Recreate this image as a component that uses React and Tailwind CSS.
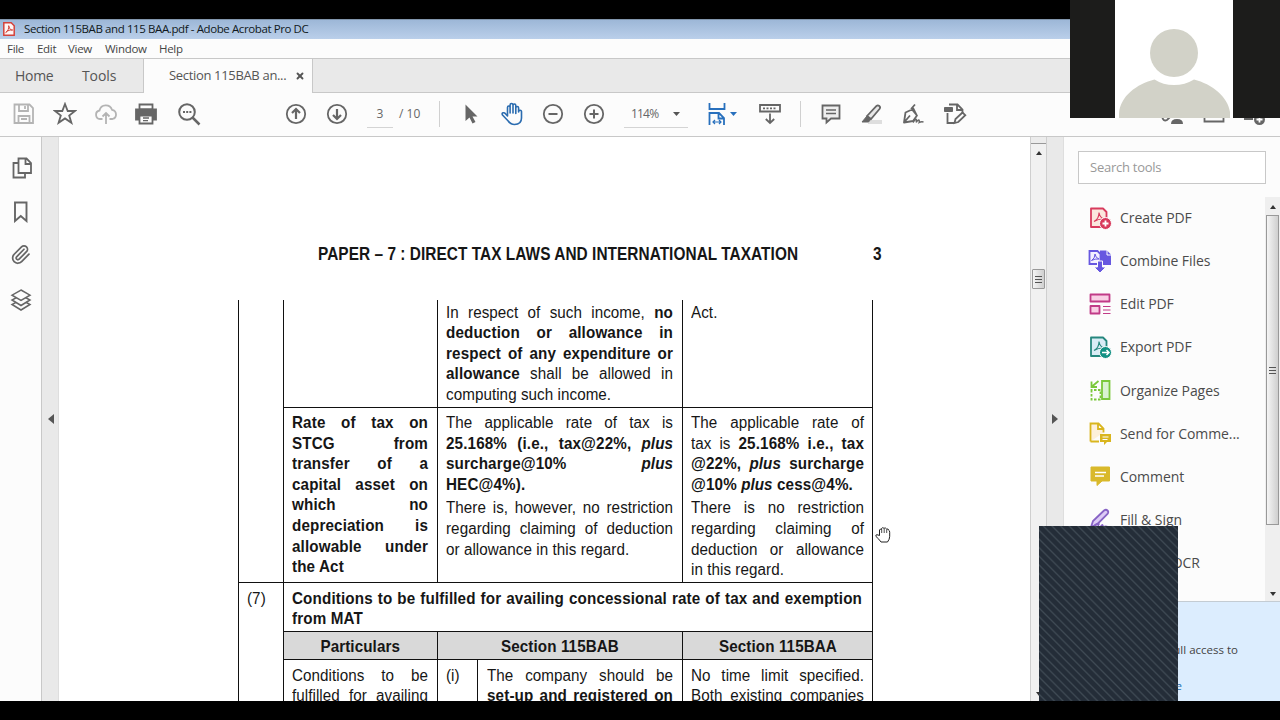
import { Paperclip, X } from "lucide-react";

const menus = [
  { label: "File", cls: "w-[30px]" },
  { label: "Edit", cls: "w-[31px]" },
  { label: "View", cls: "w-[37px]" },
  { label: "Window", cls: "w-[54px]" },
  { label: "Help", cls: "w-[40px]" },
];

const Icon = ({ children, className = "", size = 24 }) => (
  <svg
    width={size}
    height={size}
    viewBox="0 0 24 24"
    fill="none"
    stroke="currentColor"
    strokeWidth="1.8"
    className={`shrink-0 ${className}`}
  >
    {children}
  </svg>
);

const TitleBar = () => (
  <div className="flex h-[20px] items-center bg-gradient-to-b from-[#9db7d7] to-[#bacfea] border-t border-[#8296ad] pl-[3px] pb-[2px] shrink-0">
    <svg width="12" height="14" viewBox="0 0 12 14" fill="#fff5f4" stroke="#d3433c" className="shrink-0">
      <path d="M.8.8h7.4l3 3v9.4H.8z" strokeWidth="1.5" />
      <path d="M2.7 10.5C5 9 6 6.500 5.700 3.700c1 3.800 2.300 4.600 4 4.300-2.500-.4-4.800.4-7 2.500z" strokeWidth="1" />
    </svg>
    <span className="ml-[9px] text-[11.5px] leading-none tracking-[-0.4px] text-[#101820] whitespace-nowrap">
      Section 115BAB and 115 BAA.pdf - Adobe Acrobat Pro DC
    </span>
  </div>
);

const MenuBar = () => (
  <div className="flex h-[19px] items-center bg-[#fcfcfc] pl-[7px] text-[11.5px] tracking-[-0.3px] text-[#454545] shrink-0">
    {menus.map((m) => (
      <span key={m.label} className={m.cls}>{m.label}</span>
    ))}
  </div>
);

const TabBar = () => (
  <div className="flex h-[35px] bg-[#e9e9e9] border-t border-[#c8c8c8] text-[#555] shrink-0">
    <div className="flex w-[144px] items-center border-b border-r border-[#c8c8c8] pl-[15px] text-[14px]">
      <span className="w-[67px] tracking-[-0.3px]">Home</span>
      <span className="tracking-[-0.1px]">Tools</span>
    </div>
    <div className="flex w-[169px] items-center bg-[#fcfcfc] pl-[25px] border-r border-[#c8c8c8]">
      <span className="w-[126px] text-[13px] tracking-[-0.33px] whitespace-nowrap">Section 115BAB an...</span>
      <X size={10} strokeWidth={4.500} />
    </div>
    <div className="flex-1 border-b border-[#c8c8c8]" />
  </div>
);

const Toolbar = () => (
  <div className="flex h-[44px] items-center bg-[#fcfcfc] border-b border-[#c8c8c8] text-[#666] shrink-0 pl-[12px] pb-[1px]">
    <Icon className="text-[#b4b4b4]">
      <path d="M2.500 2.500h15l3.500 3.500v15h-18.500z M7 2.500v6.500h9v-6.500 M6.500 21v-7h11v7 M13 4v3 M9 17h6" />
    </Icon>
    <Icon className="ml-[17px]">
      <path d="M12 2l2.700 7h7.300l-5.800 4.500 2.200 7.300-6.400-4.400-6.400 4.400 2.200-7.300L2 9h7.300z" />
    </Icon>
    <Icon className="ml-[17px] text-[#b4b4b4]">
      <path d="M8.500 17H6a4.300 4.300 0 0 1-.5-8.500A6.500 6.500 0 0 1 18 7.800a4.700 4.700 0 0 1 .5 9.200H15.500 M12 22V11 M8.500 14.500L12 11l3.500 3.500" />
    </Icon>
    <Icon className="ml-[16px]">
      <path d="M5.500 2.500h13v5h-13z" />
      <path d="M2 7.500h20v10h-3.500v-4h-13v4H2z" fill="currentColor" />
      <path d="M5.500 13.500h13v8h-13z" fill="#fcfcfc" />
      <path d="M9 16h6 M9 18.700h5" strokeWidth="1.300" />
    </Icon>
    <Icon className="ml-[19px]">
      <circle cx="10" cy="10" r="7.800" strokeWidth="2" />
      <path d="M15.500 15.500l7 7" strokeWidth="2.500" />
      <path d="M6 10h2 M9.200 10h2 M12.400 10h2" />
    </Icon>
    <Icon className="ml-[83px]">
      <circle cx="12" cy="12" r="9.200" />
      <path d="M12 17V7 M8 11l4-4 4 4" strokeWidth="2.200" />
    </Icon>
    <Icon className="ml-[17px]">
      <circle cx="12" cy="12" r="9.200" />
      <path d="M12 7v10 M8 13l4 4 4-4" strokeWidth="2.200" />
    </Icon>
    <div className="ml-[18px] mt-[4px] flex h-[24px] w-[26px] items-start justify-center border-b border-[#d4d4d4] text-[12px] leading-[20px]">3</div>
    <div className="ml-[6px] w-[34px] text-[12px] whitespace-nowrap">/ 10</div>
    <div className="h-[26px] w-px bg-[#d0d0d0] ml-[6px]" />
    <Icon className="ml-[19px]">
      <path d="M6.500 2.500v16.500l4-3.500 3 6 3-1.500-3-5.500h5z" fill="currentColor" stroke="none" />
    </Icon>
    <Icon className="ml-[17px] text-[#2b6cb0]">
      <path
        d="M7.500 14V5.500q0-1.500 1.300-1.500t1.300 1.500V11V3q0-1.500 1.400-1.500T13 3v8V3.500Q13 2 14.400 2t1.400 1.500V11.500V6q0-1.500 1.400-1.500T18.600 6v4q0-1.700 1.500-1.700T21.500 10v6q0 6.500-7 6.500-4 0-6.300-3.500L2.500 13q-1-1.700.5-2.200 1.500-.4 2.500.9z"
        strokeLinejoin="round"
        strokeWidth="1.600"
      />
    </Icon>
    <Icon className="ml-[17px]">
      <circle cx="12" cy="12" r="9.200" />
      <path d="M7.500 12h9" strokeWidth="2" />
    </Icon>
    <Icon className="ml-[17px]">
      <circle cx="12" cy="12" r="9.200" />
      <path d="M7.500 12h9 M12 7.500v9" strokeWidth="2" />
    </Icon>
    <div className="ml-[18px] mt-[4px] flex h-[24px] w-[64px] border-b border-[#d4d4d4] pl-[7px] text-[12px] leading-[20px] tracking-[-0.8px]">
      <span className="w-[42px]">114%</span>
      <svg width="7" height="4" className="mt-[8px]"><path d="M0 0h7L3.500 4z" fill="#555" /></svg>
    </div>
    <Icon className="ml-[17px] text-[#2870bd]">
      <path d="M4.500 1v6h15V1 M4.500 23V11h9.500l5 5v7 M13.500 11v5.500H19" />
      <path d="M8 20h8 M10 18l-2 2 2 2 M14 18l2 2-2 2" strokeWidth="1.200" />
    </Icon>
    <svg width="7" height="4" className="shrink-0 ml-px"><path d="M0 0h7L3.500 4z" fill="#2870bd" /></svg>
    <Icon className="ml-[21px]">
      <path d="M2 3h20v6.500H2z M12 11.500v9.500 M7.800 17L12 21l4.200-4" />
      <path d="M5 6.300h14" strokeDasharray="2 1.500" />
    </Icon>
    <div className="h-[26px] w-px bg-[#d0d0d0] ml-[18px]" />
    <Icon className="ml-[18px]">
      <path d="M3.500 3.500h17v13H12l-4.500 4v-4h-4z" fill="#eee" />
      <path d="M7 8h10 M7 11.500h10" strokeWidth="1.400" />
    </Icon>
    <Icon className="ml-[17px]">
      <path d="M8 18h14v4H8z" fill="#dedede" stroke="none" />
      <path d="M7 14L16.500 4q1.300-1.300 2.800 0t.2 3L11 17z" fill="#e8e8e8" />
      <path d="M7 14l4 3-2.500 3H2z" fill="currentColor" strokeWidth="1" />
    </Icon>
    <Icon className="ml-[17px]">
      <path d="M3 20.500l1.500-10L11 7.500l5 6-4 5.500zM3 20.500l6-7 M10 7l4-4.500 M16 14l-4-8" strokeLinejoin="round" />
      <path d="M12 20.500c2.500-4 4-4.500 3.200 0 2-3.500 3.500-3 3 0 1.500-1 2.500-1 4.300-.6" strokeWidth="1.500" />
    </Icon>
    <Icon className="ml-[18px]">
      <path d="M6 2.500h8.500l5 5v4 M14 2.500V8h5.500 M4.500 11v10H11" />
      <path d="M1.500 5.500h8v4h-8z" fill="currentColor" strokeWidth="1" />
      <path d="M11.500 21l1-4 7-6.500 2.800 2.700-7 6.800z" fill="#fcfcfc" />
    </Icon>
    <div className="ml-[193px] flex gap-[17px]">
      <Icon>
        <path d="M2 14q1 6 5 4l3-3" />
        <path d="M11 22q0-5 6-5t6 5z" fill="currentColor" stroke="none" />
      </Icon>
      <Icon className="ml-[1px]"><path d="M2.500 8h19v11.500h-19z" /></Icon>
      <Icon>
        <path d="M1 16.500h9" strokeWidth="3" />
        <circle cx="16.500" cy="17.500" r="5.500" fill="currentColor" stroke="none" />
        <path d="M13.500 17.500h6 M16.500 14.500v6" stroke="#fff" />
      </Icon>
    </div>
  </div>
);

const NavPane = () => (
  <div className="flex w-[42px] flex-col bg-[#fcfcfc] border-r border-[#c8c8c8] pl-[10px] pt-[19px] gap-[21px] text-[#666] shrink-0">
    <Icon className="h-[24px]">
      <path d="M8.500 2.500h8l4.500 4.500v10H8.500z M15.500 2.500V8H21 M8.500 7H3.500v14.500H15V17" />
    </Icon>
    <svg width="22" height="22" viewBox="0 0 22 22" fill="none" stroke="currentColor" strokeWidth="1.900">
      <path d="M5 1.500h11.500v18.500l-5.750-5L5 20z" />
    </svg>
    <Paperclip size={21} strokeWidth={2} />
    <svg width="22" height="24" viewBox="0 0 22 24" fill="#fcfcfc" stroke="currentColor" strokeWidth="1.500" className="mt-[2px]">
      <path d="M11 11.500l9 5-9 5.500-9-5.500z" />
      <path d="M11 7l9 5-9 5.500L2 12z" />
      <path d="M11 2l9 5.200-9 5.300-9-5.300z" />
    </svg>
  </div>
);

const Handle = ({ side }) => (
  <div
    className={`flex w-[17px] items-center justify-center bg-[#e9e9e9] border-r border-[#dedede] shrink-0 ${side === "left" ? "pl-[2px]" : ""}`}
  >
    <svg width="6" height="10">
      <path d={side === "left" ? "M6 0v10L0 5z" : "M0 0v10l6-5z"} fill="#555" />
    </svg>
  </div>
);

// One printed line; lines flagged "j" are spread over the full column width.
// The condensed face is the regular one squeezed to 88%.
const Line = ({ children, j }) => (
  <div
    className={`h-[20.6px] w-[113.636%] origin-left scale-x-88 whitespace-nowrap tracking-[0.06px] ${j ? "[text-align-last:justify]" : ""}`}
  >
    {children}
  </div>
);

const B = ({ children }) => <b className="tracking-[0.15px]">{children}</b>;
const I = ({ children }) => <b className="italic">{children}</b>;

const Th = ({ children }) => (
  <div className="flex justify-center border-r border-b border-[#111] bg-[#d9d9d9] pt-[4px]">
    <b className="scale-x-88 whitespace-nowrap tracking-[0.1px]">{children}</b>
  </div>
);

const cell = "min-w-0 border-r border-b border-[#111] pl-[8px]";

const Page = () => (
  <div className="flex-1 min-w-0 overflow-hidden bg-white pl-[179px] font-['Liberation_Sans',Arial,sans-serif] text-[17.3px] leading-[20.6px] text-[#161616]">
    <div className="flex h-[163px] pl-[80px] pt-[107px] font-bold text-[17.5px]">
      <span className="w-[555px] origin-left scale-x-88 whitespace-nowrap tracking-[0.05px]">
        PAPER – 7 : DIRECT TAX LAWS AND INTERNATIONAL TAXATION
      </span>
      <span className="origin-left scale-x-88">3</span>
    </div>
    <div className="grid w-[635px] grid-cols-[45px_154px_245px_190px] grid-rows-[108px_175px_49px_28px_120px] border-l border-[#111]">
      <div className="border-r border-[#111]" />
      <div className={cell} />
      <div className={`${cell} pt-[1.500px] pr-[9px]`}>
        <Line j>In respect of such income, <B>no</B></Line>
        <Line j><B>deduction or allowance in</B></Line>
        <Line j><B>respect of any expenditure or</B></Line>
        <Line j><B>allowance</B> shall be allowed in</Line>
        <Line>computing such income.</Line>
      </div>
      <div className={`${cell} pt-[1.500px] pr-[8px]`}><Line>Act.</Line></div>

      <div className="border-r border-b border-[#111]" />
      <div className={`${cell} pt-[4px] pr-[9px]`}>
        <Line j><B>Rate of tax on</B></Line>
        <Line j><B>STCG from</B></Line>
        <Line j><B>transfer of a</B></Line>
        <Line j><B>capital asset on</B></Line>
        <Line j><B>which no</B></Line>
        <Line j><B>depreciation is</B></Line>
        <Line j><B>allowable under</B></Line>
        <Line><B>the Act</B></Line>
      </div>
      <div className={`${cell} pt-[4px] pr-[9px]`}>
        <Line j>The applicable rate of tax is</Line>
        <Line j><B>25.168% (i.e., tax@22%, </B><I>plus</I></Line>
        <Line j><B>surcharge@10% </B><I>plus</I></Line>
        <Line><B>HEC@4%).</B></Line>
        <div className="pt-[3px]">
          <Line j>There is, however, no restriction</Line>
          <Line j>regarding claiming of deduction</Line>
          <Line>or allowance in this regard.</Line>
        </div>
      </div>
      <div className={`${cell} pt-[4px] pr-[8px]`}>
        <Line j>The applicable rate of</Line>
        <Line j>tax is <B>25.168% i.e., tax</B></Line>
        <Line j><B>@22%, </B><I>plus</I><B> surcharge</B></Line>
        <Line><B>@10% </B><I>plus</I><B> cess@4%.</B></Line>
        <div className="pt-[3px]">
          <Line j>There is no restriction</Line>
          <Line j>regarding claiming of</Line>
          <Line j>deduction or allowance</Line>
          <Line>in this regard.</Line>
        </div>
      </div>

      <div className="row-span-3 border-r border-[#111] pt-[4.500px] pl-[8px]"><Line>(7)</Line></div>
      <div className={`${cell} col-span-3 pr-[10px] pt-[4.500px]`}>
        <Line j><B>Conditions to be fulfilled for availing concessional rate of tax and exemption</B></Line>
        <Line><B>from MAT</B></Line>
      </div>

      <Th>Particulars</Th>
      <Th>Section 115BAB</Th>
      <Th>Section 115BAA</Th>

      <div className={`${cell} pt-[4.500px] pr-[9px]`}>
        <Line j>Conditions to be</Line>
        <Line j>fulfilled for availing</Line>
      </div>
      <div className="grid min-w-0 grid-cols-[40px_204px] border-r border-[#111]">
        <div className="border-r border-[#111] pl-[8px] pt-[4.500px]"><Line>(i)</Line></div>
        <div className="min-w-0 pt-[4.500px] pl-[9px] pr-[9px]">
          <Line j>The company should be</Line>
          <Line j><B>set-up and registered on</B></Line>
        </div>
      </div>
      <div className={`${cell} pt-[4.500px] pr-[8px]`}>
        <Line j>No time limit specified.</Line>
        <Line j>Both existing companies</Line>
      </div>
    </div>
  </div>
);

const Grip = () => (
  <svg width="7" height="7" viewBox="0 0 7 7" stroke="#555" strokeWidth="1">
    <path d="M0 .5h7M0 3.500h7M0 6.500h7" />
  </svg>
);

const PageScroll = () => (
  <div className="flex w-[17px] flex-col items-center border-x border-[#cfcfcf] bg-[#f1f1f1] shrink-0">
    <div className="h-[7px] w-full border-b border-[#999] bg-[#ececec]" />
    <svg width="6" height="4" className="mt-[7px]"><path d="M3 0l3 4H0z" fill="#333" /></svg>
    <div className="mt-[114px] flex h-[20px] w-[13px] items-center justify-center rounded-[1px] border border-[#999] bg-gradient-to-r from-[#f5f5f5] to-[#cfcfcf]">
      <Grip />
    </div>
    <svg width="6" height="4" className="mt-auto mb-[5px]"><path d="M0 0h6L3 4z" fill="#333" /></svg>
  </div>
);

const PdfSheet = ({ fill }) => (
  <>
    <path d="M3 2.500h12l3.500 3.500v15H3z" fill={fill} strokeLinejoin="round" />
    <path d="M6 15.500q5-2.500 5-9 1 5.500 5 6.500-5-.5-10 2.500z" strokeWidth="1.100" />
  </>
);

const tools = [
  {
    name: "Create PDF",
    cls: "text-[#d83b5d]",
    art: (
      <>
        <PdfSheet fill="#fbe7dd" />
        <circle cx="17.500" cy="17.500" r="6" fill="currentColor" stroke="#fcfcfc" strokeWidth="1" />
        <path d="M14.500 17.500h6M17.500 14.500v6" stroke="#fff" />
      </>
    ),
  },
  {
    name: "Combine Files",
    cls: "text-[#6758e0]",
    art: (
      <>
        <path d="M12 1.500h7l4 4V16H12z" fill="currentColor" stroke="none" />
        <path d="M19 1v5h4" stroke="#fff" strokeWidth="1" />
        <path d="M1.500 2h8l3 3v10H1.500z" fill="#f4f1ff" />
        <path d="M3.500 11.500q3.500-2 3.500-6.500.5 4 4 5-4-.5-7.500 1.500z" strokeWidth="1" />
        <path d="M9.500 12h5v6h3.500l-6 6-6-6h3.500z" fill="currentColor" stroke="#fcfcfc" strokeWidth="1" />
      </>
    ),
  },
  {
    name: "Edit PDF",
    cls: "text-[#c13b88]",
    art: (
      <>
        <path d="M2.500 2.500h19v7h-19zM2.500 14h9v7.500h-9z" fill="#f9cfe5" strokeLinejoin="round" />
        <path d="M15 14.500h7.500M15 18h7.500M15 21.500h7.500" strokeWidth="1.200" />
      </>
    ),
  },
  {
    name: "Export PDF",
    cls: "text-[#26877e]",
    art: (
      <>
        <PdfSheet fill="#d9ecf5" />
        <circle cx="17.500" cy="17.500" r="6" fill="#139184" stroke="#fcfcfc" strokeWidth="1" />
        <path d="M14 17.500h7M18.500 15l2.500 2.500-2.500 2.500" stroke="#fff" strokeWidth="1.500" />
      </>
    ),
  },
  {
    name: "Organize Pages",
    cls: "text-[#7ac83b]",
    art: (
      <>
        <path d="M14 3h7.500v18H14z" fill="#d9f3d0" />
        <path d="M3.500 12v9.500h9V12z" strokeDasharray="2.500 1.500" />
        <path d="M10.500 3L4 8.500M3.500 3.500V9H9" />
      </>
    ),
  },
  {
    name: "Send for Comme...",
    cls: "text-[#d9b51e]",
    art: (
      <>
        <path d="M2.500 20.500v-18h8l5 5v4M10 2.500V8h5.500M2.500 20.500H11" fill="#fdf0da" />
        <path d="M12 13h11v8h-4l-3 3v-3h-4z" fill="currentColor" stroke="none" />
        <path d="M14.500 16h6M14.500 18.500h5" stroke="#fff" strokeWidth="1" />
      </>
    ),
  },
  {
    name: "Comment",
    cls: "text-[#d9b92b]",
    art: (
      <>
        <path d="M3 3h18.500v14H14l-5 4.500V17H3z" fill="currentColor" strokeLinejoin="round" strokeWidth="1" />
        <path d="M7 8.500h11M7 12h9" stroke="#fff" strokeWidth="1.400" />
      </>
    ),
  },
  {
    name: "Fill & Sign",
    cls: "text-[#8763c5]",
    art: (
      <>
        <path d="M3 19l2-6L16 2.500q2-1.500 3.500 0t0 3.500L9 16.500z" fill="#dccbf5" />
        <path d="M2 22q7-8 9-6-3 6 0 5 4-7 4-2 4-2 6 1" strokeWidth="1.600" />
      </>
    ),
  },
  { name: "Scan & OCR", cls: "mr-[4px] text-[#63a653]", art: <path d="M3 3h18v18H3z" /> },
];

const ToolsPane = () => (
  <div className="flex w-[216px] shrink-0 flex-col bg-[#fcfcfc]">
    <div className="ml-[14px] mt-[14px] flex h-[33px] w-[188px] shrink-0 items-center border border-[#c8c8c8] bg-white pl-[11px] text-[13px] tracking-[-0.25px] text-[#999]">
      Search tools
    </div>
    <div className="mt-[13px] flex h-[405px] shrink-0 overflow-hidden border-b border-[#c4ccd3]">
      <div className="-mt-px flex w-[201px] flex-col pl-[24px]">
        {tools.map((t) => (
          <div key={t.name} className="flex h-[43.15px] shrink-0 items-center gap-[8px]">
            <Icon className={t.cls}>{t.art}</Icon>
            <span className="text-[14px] tracking-[-0.07px] text-[#4b4b4b] whitespace-nowrap">{t.name}</span>
          </div>
        ))}
      </div>
      <div className="flex w-[15px] flex-col items-center bg-[#efefef]">
        <svg width="6" height="4" className="mt-[8px]"><path d="M3 0l3 4H0z" fill="#333" /></svg>
        <div className="mt-[6px] flex h-[310px] w-[13px] items-center justify-center border border-[#999] bg-gradient-to-r from-[#f5f5f5] to-[#cfcfcf]">
          <Grip />
        </div>
        <svg width="6" height="4" className="mt-auto mb-[5px]"><path d="M0 0h6L3 4z" fill="#333" /></svg>
      </div>
    </div>
    <div className="flex-1 bg-[#dcedfe] pt-[38.500px] pl-[52px] text-[11.5px] leading-[18px] text-[#444]">
      <div className="flex w-[122px] justify-end whitespace-nowrap">Get full access to</div>
      <div className="mt-[18px] flex w-[66px] justify-end text-[#1c6fb3] whitespace-nowrap">Subscribe</div>
    </div>
  </div>
);

const HandCursor = () => (
  <svg width="16" height="17" viewBox="0 0 16 17" className="absolute left-[875px] top-[526px]">
    <path
      d="M4.500 9.500V4Q5 2.500 6.500 3.500V2.500Q7.500 1 9 2.300q1.500-1 2.500.7 2-.5 2.200 1.300 1 .2 1 2v4q0 3-2.200 5.700H6Q4 13 1 10.500q-.7-1.800 1-1.800z"
      fill="#fff"
      stroke="#222"
      strokeLinejoin="round"
    />
    <path d="M6.700 3.500V7M9.200 3V7M11.700 3.500V7" stroke="#222" strokeWidth=".8" />
  </svg>
);

const App = () => (
  <div className="relative h-[720px] w-[1280px] overflow-hidden bg-black pt-[19px] font-['Open_Sans','Noto_Sans',sans-serif]">
    <div className="flex h-[682px] flex-col overflow-hidden">
      <TitleBar />
      <MenuBar />
      <TabBar />
      <Toolbar />
      <div className="flex min-h-0 flex-1">
        <NavPane />
        <Handle side="left" />
        <Page />
        <PageScroll />
        <Handle side="right" />
        <ToolsPane />
      </div>
    </div>
    <HandCursor />
    {/* participant thumbnail */}
    <div className="absolute right-0 top-0 flex h-[118px] w-[210px] justify-center bg-[#1c1c1b] pr-[2px]">
      <svg width="118" height="118" className="bg-white">
        <circle cx="59" cy="53" r="24" fill="#d2d2c8" />
        <path d="M4 118V114C5 96 22 84 39.500 79.500Q48 85 59 85t20-5.500C97 84 113 97 115 112v6z" fill="#d2d2c8" />
      </svg>
    </div>
    <div className="absolute left-[1039px] top-[526px] h-[175px] w-[139px] bg-[#242d38] bg-[repeating-linear-gradient(45deg,#242d38_0px,#242d38_3.500px,#3f4a54_4.800px,#242d38_6.100px)]" />
  </div>
);

export default App;
